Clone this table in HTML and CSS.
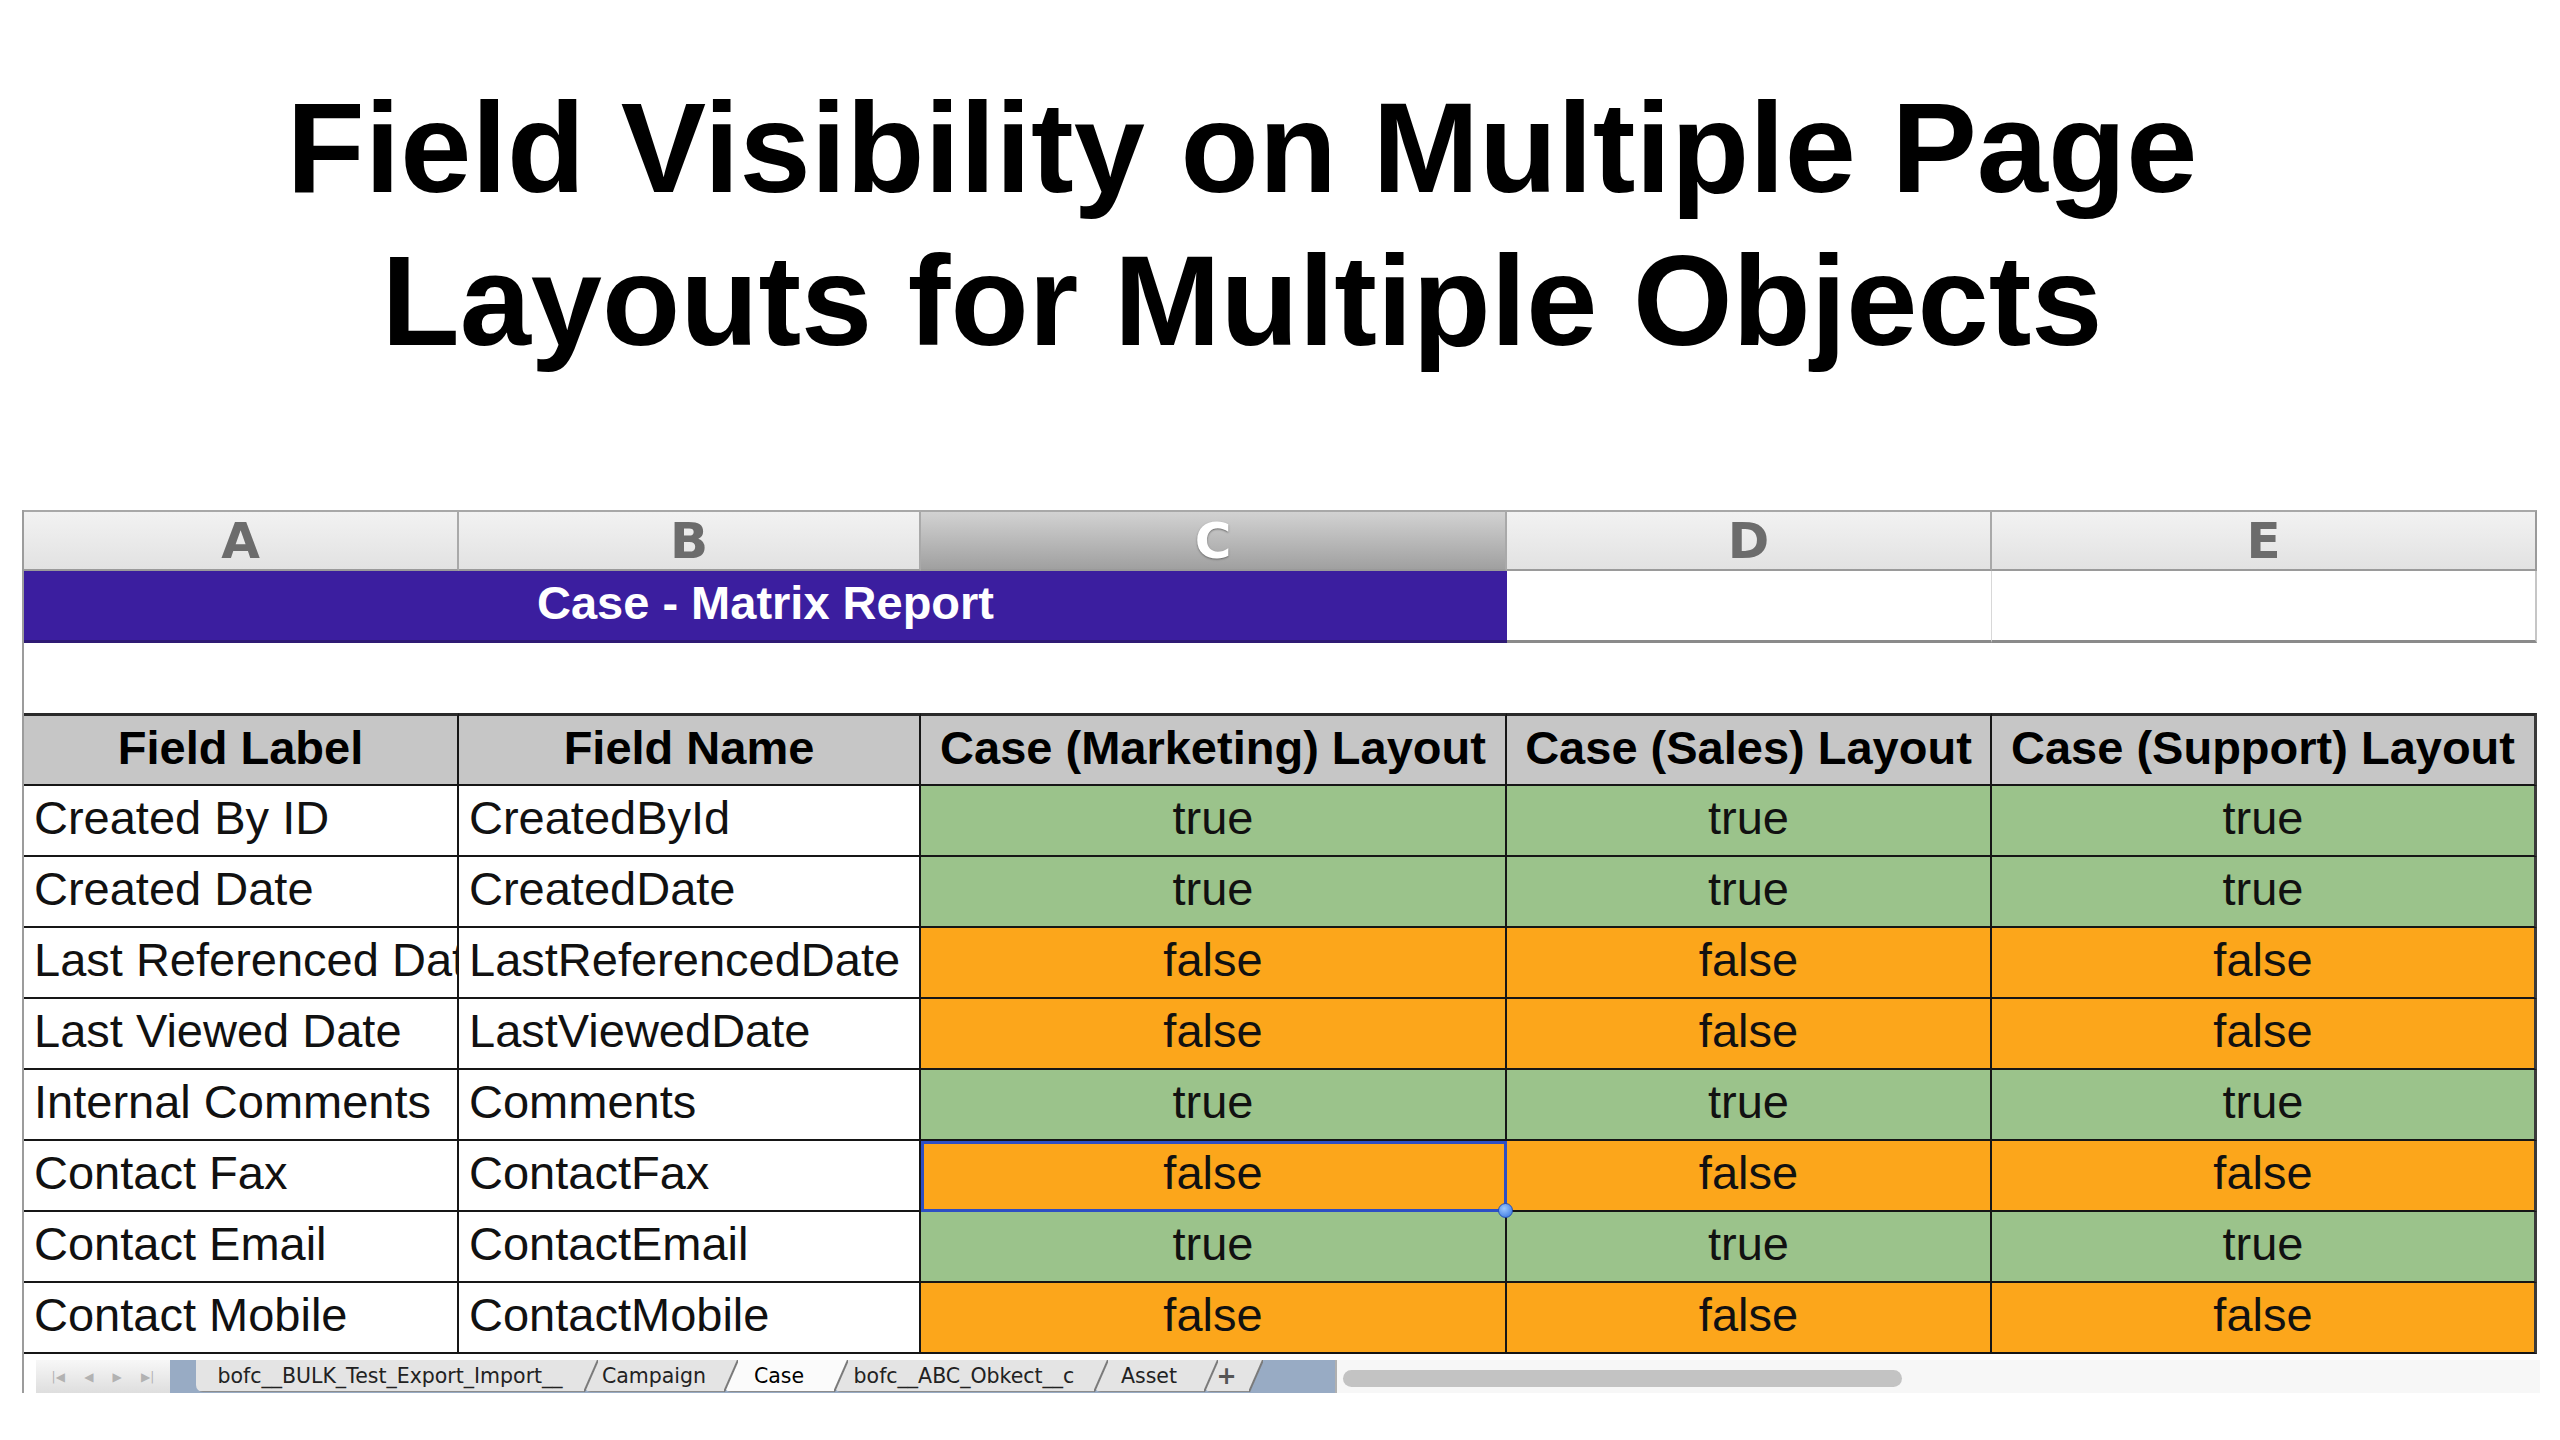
FILE: index.html
```html
<!DOCTYPE html>
<html lang="en">
<head>
<meta charset="utf-8">
<title>Field Visibility on Multiple Page Layouts</title>
<link rel="stylesheet" href="styles.css">
</head>
<body>
<h1 class="title">Field Visibility on Multiple Page<br>Layouts for Multiple Objects</h1>
<div class="sheet">
  <div class="grid">
    <div class="ch">A</div>
    <div class="ch">B</div>
    <div class="ch ch-sel">C</div>
    <div class="ch">D</div>
    <div class="ch ch-last">E</div>

    <div class="banner">Case - Matrix Report</div>
    <div class="r1 r1d"></div>
    <div class="r1 r1e"></div>

    <div class="blank"></div>

    <div class="c hd">Field Label</div>
    <div class="c hd">Field Name</div>
    <div class="c hd">Case (Marketing) Layout</div>
    <div class="c hd">Case (Sales) Layout</div>
    <div class="c hd last">Case (Support) Layout</div>

    <div class="c">Created By ID</div>
    <div class="c">CreatedById</div>
    <div class="c v g">true</div>
    <div class="c v g">true</div>
    <div class="c v g last">true</div>

    <div class="c">Created Date</div>
    <div class="c">CreatedDate</div>
    <div class="c v g">true</div>
    <div class="c v g">true</div>
    <div class="c v g last">true</div>

    <div class="c">Last Referenced Date</div>
    <div class="c">LastReferencedDate</div>
    <div class="c v o">false</div>
    <div class="c v o">false</div>
    <div class="c v o last">false</div>

    <div class="c">Last Viewed Date</div>
    <div class="c">LastViewedDate</div>
    <div class="c v o">false</div>
    <div class="c v o">false</div>
    <div class="c v o last">false</div>

    <div class="c">Internal Comments</div>
    <div class="c">Comments</div>
    <div class="c v g">true</div>
    <div class="c v g">true</div>
    <div class="c v g last">true</div>

    <div class="c">Contact Fax</div>
    <div class="c">ContactFax</div>
    <div class="c v o sel">false</div>
    <div class="c v o">false</div>
    <div class="c v o last">false</div>

    <div class="c">Contact Email</div>
    <div class="c">ContactEmail</div>
    <div class="c v g">true</div>
    <div class="c v g">true</div>
    <div class="c v g last">true</div>

    <div class="c">Contact Mobile</div>
    <div class="c">ContactMobile</div>
    <div class="c v o">false</div>
    <div class="c v o">false</div>
    <div class="c v o last">false</div>
  </div>

  <div class="tabbar">
    <div class="nav"><span>|◀</span><span>◀</span><span>▶</span><span>▶|</span></div>
    <div class="tabs">
      <div class="tab">bofc__BULK_Test_Export_Import__</div>
      <div class="tab">Campaign</div>
      <div class="tab act">Case</div>
      <div class="tab">bofc__ABC_Obkect__c</div>
      <div class="tab">Asset</div>
      <div class="tab plus">+</div>
    </div>
    <div class="scroll"><div class="thumb"></div></div>
  </div>
</div>
</body>
</html>
```

FILE: styles.css
```css
* { box-sizing: border-box; }

body {
  margin: 0;
  background: #ffffff;
  color: #000;
  font-family: "Liberation Sans", Arial, sans-serif;
}

.title {
  margin: 71px 0 0;
  padding-right: 76px;
  font-size: 128px;
  line-height: 153px;
  font-weight: 700;
  text-align: center;
}

.sheet {
  margin: 133px 0 0 22px;
  width: 2515px;
  border-left: 2px solid #9c9c9c;
}

.grid {
  display: grid;
  grid-template-columns: 435px 462px 586px 485px 545px;
  grid-template-rows: 61px 72px 70px 73px repeat(8, 71px);
}

.ch {
  display: flex;
  align-items: center;
  justify-content: center;
  font-family: "DejaVu Sans", sans-serif;
  font-weight: 700;
  font-size: 50px;
  color: #6c6c6c;
  background: linear-gradient(#f2f2f2, #e2e2e2);
  border-top: 2px solid #a8a8a8;
  border-right: 2px solid #a9a9a9;
  border-bottom: 2px solid #9a9a9a;
}

.ch-sel {
  background: linear-gradient(#d2d2d2, #a0a0a0);
  color: #ffffff;
  text-shadow: 0 1px 2px #666;
}

.ch-last { border-right: 2px solid #9a9a9a; }

.banner {
  grid-column: 1 / 4;
  display: flex;
  align-items: center;
  justify-content: center;
  padding-bottom: 6px;
  background: #3b1e9f;
  color: #ffffff;
  font-weight: 700;
  font-size: 47px;
  border-bottom: 3px solid #2e1a74;
}

.r1 {
  background: #fff;
  border-bottom: 3px solid #8a8a8a;
}
.r1d { border-right: 1px solid #d8d8d8; }
.r1e { border-right: 2px solid #c6c6c6; }

.blank { grid-column: 1 / 6; }

.c {
  display: flex;
  align-items: center;
  padding: 0 10px 6px;
  font-size: 47px;
  color: #111;
  white-space: nowrap;
  overflow: hidden;
  border-right: 2px solid #161616;
  border-bottom: 2px solid #161616;
}

.hd {
  justify-content: center;
  font-weight: 700;
  background: #c6c6c6;
  border-top: 3px solid #2a2a2a;
  color: #000;
}

.v { justify-content: center; }
.g { background: #9bc38b; }
.o { background: #fca61b; }
.last { border-right: 3px solid #3a3a3a; }

.sel {
  position: relative;
  overflow: visible;
  outline: 3px solid #2d4fc4;
  outline-offset: -3px;
}
.sel::after {
  content: "";
  position: absolute;
  right: -8px;
  bottom: -8px;
  width: 13px;
  height: 13px;
  border-radius: 50%;
  background: radial-gradient(circle at 40% 35%, #9cc8ff, #2f6fe0);
  border: 1px solid #2450b8;
  z-index: 2;
}

/* bottom tab bar */
.tabbar {
  display: flex;
  height: 33px;
  margin-top: 6px;
  width: 2516px;
  padding-left: 12px;
}

.nav {
  width: 134px;
  display: flex;
  align-items: center;
  justify-content: space-around;
  padding: 0 6px;
  background: linear-gradient(#f7f7f7, #dedede);
  color: #b2b2b2;
  font-family: "DejaVu Sans", sans-serif;
  font-size: 12px;
}

.tabs {
  width: 1165px;
  display: flex;
  padding-left: 26px;
  background: #98abc4;
}

.tab {
  --tb: #e4e4e4;
  position: relative;
  height: 32px;
  margin-left: -14px;
  padding-right: 14px;
  display: flex;
  align-items: center;
  justify-content: center;
  font-family: "DejaVu Sans", sans-serif;
  font-size: 20.5px;
  color: #222;
  white-space: nowrap;
  border-bottom-left-radius: 7px;
  background:
    linear-gradient(#8c8c8c, #8c8c8c) left bottom / calc(100% - 14px) 1px no-repeat,
    linear-gradient(to bottom right, var(--tb) calc(50% - 1.5px), #7a7a7a calc(50% - 0.5px), #7a7a7a calc(50% + 0.5px), transparent calc(50% + 1.5px)) right top / 14px 100% no-repeat,
    linear-gradient(var(--tb), var(--tb)) left top / calc(100% - 14px) 100% no-repeat;
}
.tab:first-child { margin-left: 0; }
.tab:nth-child(1) { width: 402px; z-index: 6; }
.tab:nth-child(2) { width: 154px; z-index: 5; }
.tab:nth-child(3) { width: 124px; z-index: 4; }
.tab:nth-child(4) { width: 274px; z-index: 3; }
.tab:nth-child(5) { width: 124px; z-index: 2; }
.tab:nth-child(6) { width: 59px; z-index: 1; }

.tab.act { --tb: #fbfbfb; color: #000; }
.tab.plus { font-size: 24px; font-weight: 700; color: #555; }

.scroll {
  flex: 1;
  padding: 10px 0 0 6px;
  background: #f7f7f7;
  border-left: 2px solid #b0b0b0;
}

.thumb {
  width: 559px;
  height: 17px;
  border-radius: 9px;
  background: #c3c3c3;
}
```
